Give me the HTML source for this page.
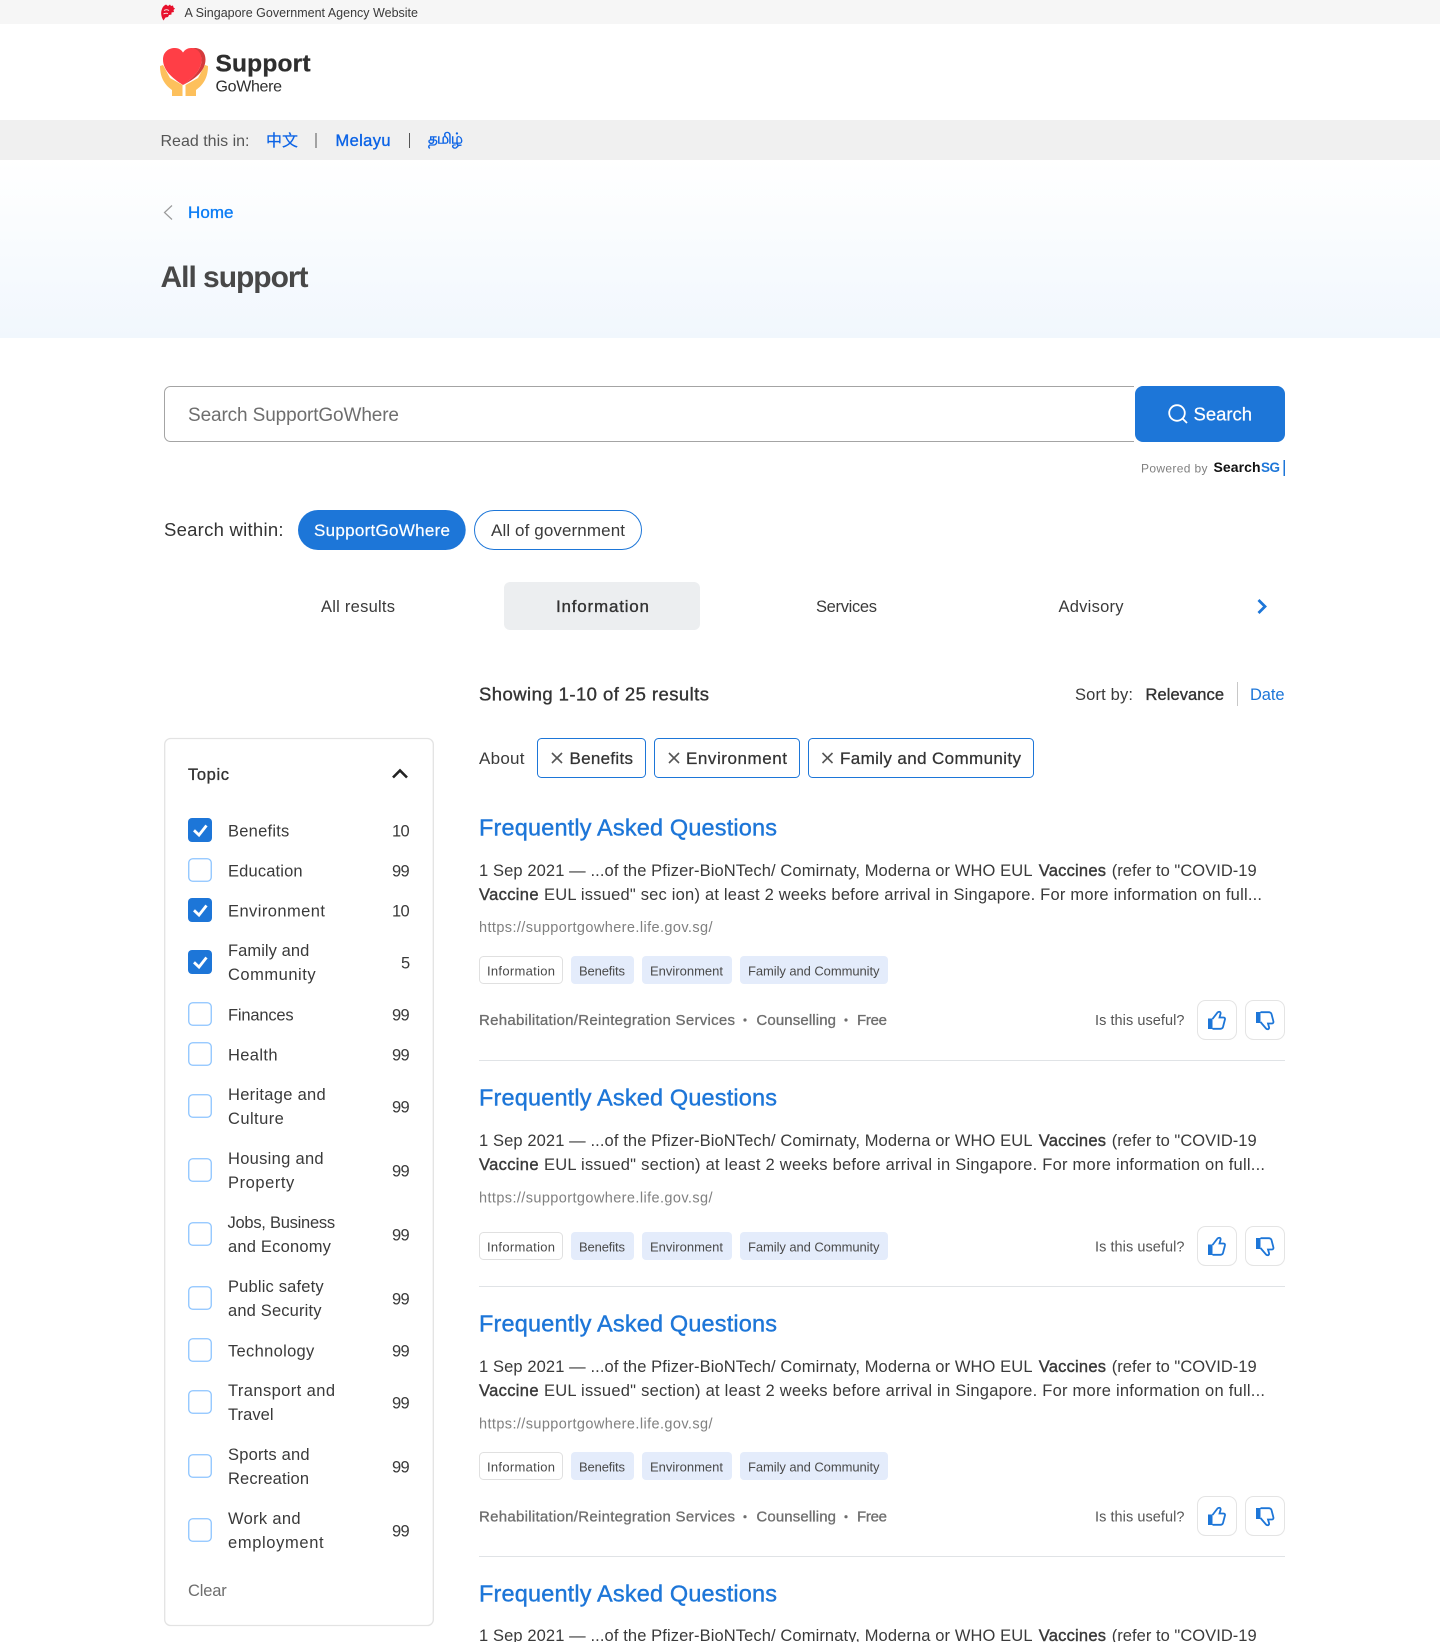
<!DOCTYPE html>
<html lang="en"><head><meta charset="utf-8"><title>All support - SupportGoWhere</title>
<style>
html,body{margin:0;padding:0;background:#fff}
svg{display:block}
text{font-family:"Liberation Sans","Noto Sans CJK SC",sans-serif;fill:#3a3a3a;font-size:16.5px}
.m{stroke:currentColor;stroke-width:.35px}
.b{color:#1d76d8;fill:#1d76d8}
.t{color:#1d76d8;fill:#1d76d8;font-size:23.5px;stroke:currentColor;stroke-width:.4px}
.url{fill:#808080;font-size:14.5px}
.tg{fill:#4a4a4a;font-size:13px}
.me{color:#6e6e6e;fill:#6e6e6e;font-size:15px;stroke:currentColor;stroke-width:.3px}
.u{fill:#555;font-size:14.5px}
.d{color:#3a3a3a;stroke:currentColor;stroke-width:.4px}
</style></head><body>
<svg xmlns="http://www.w3.org/2000/svg" width="1440" height="1642" viewBox="0 0 1440 1642">
<defs>
<linearGradient id="h" x1="0" y1="0" x2="0" y2="1"><stop offset="0" stop-color="#fff"/><stop offset="1" stop-color="#f1f7fd"/></linearGradient>
<g id="on"><rect width="24" height="24" rx="4" fill="#1d76d8"/><path d="M6 12.3l5 4.7 7.5-9.5" fill="none" stroke="#fff" stroke-width="2.8"/></g>
<g id="off"><rect x=".75" y=".75" width="22.5" height="22.5" rx="4" fill="#fff" stroke="#8cc4ff" stroke-width="1.3"/></g>
<g id="btns">
<rect x=".5" y=".5" width="39" height="39" rx="8" fill="#fff" stroke="#e4e4e4"/>
<rect x="48.5" y=".5" width="39" height="39" rx="8" fill="#fff" stroke="#e4e4e4"/>
<rect x="11" y="18.5" width="4.5" height="10.5" fill="#1d76d8"/>
<path d="M15.5 19L20.5 12.5C22.5 11 24 12 23.5 14L22.5 17.5L26.5 17.5C28 17.5 28.3 19 27.8 20L26 27C25.5 28.5 24.5 28.8 23.5 28.8L15.5 28.8" fill="none" stroke="#1d76d8" stroke-width="1.8"/>
<rect x="59" y="12" width="4.5" height="11" fill="#1d76d8"/>
<path d="M63.5 12.2L71.5 12.2C73 12.2 74 12.5 74.5 14L76.3 21C76.8 22.5 76 23.5 75 23.5L71 23.5L72 27C72.5 29 71 30 69 28.5L63.5 22" fill="none" stroke="#1d76d8" stroke-width="1.8"/>
</g>
<path id="x" d="M0 0l10 10M10 0l-10 10" fill="none" stroke="#555" stroke-width="1.6"/>
</defs>

<!-- masthead -->
<rect width="1440" height="24" fill="#f6f6f6"/>
<path d="M166 4.5L168 6L170 4.5L171 6L173 5.5L173.5 7.5L175 8.5L173.5 10L174 12L171.5 12.5L171.5 14.5L169 15L168 17L165.5 17.5L163.5 20.5C161 17 160.5 12 162 9C162.5 7 164 5.5 166 4.5Z" fill="#e8112d"/>
<path d="M164 10.5C165.5 9.5 167.5 9.5 169 10.5M163.5 14C165 13 166.5 13 168 13.5" fill="none" stroke="#f6f6f6" stroke-width=".8"/>
<text x="184.5" y="17" textLength="233.5" style="font-size:12.5px" fill="#484848">A Singapore Government Agency Website</text>

<!-- logo -->
<path d="M160 66L163 65L170 78L182.5 85L182.5 96L172 96L172 90C165 85 160 78 160 66Z" fill="#fdc05c"/>
<path d="M208 66L205 65L198 78L185.5 85L185.5 96L196 96L196 90C203 85 208 78 208 66Z" fill="#fdc05c"/>
<path d="M183 85C195 79 205.5 71 205.5 59.5C205.5 52.5 201 48 195 48C192.5 48 190 48.8 188 50L190 50C197 50 201.5 54 201.5 60C201.5 70 193 78 183 85Z" fill="#d43a3c"/>
<path d="M183 85C172 78 163 70 163 59.5C163 52 168.5 48 175 48C179 48 181.5 50 183 52.5C185 49.5 188 48 191 48C197.5 48 201.5 53 201.5 60C201.5 70 193 78 183 85Z" fill="#ff3e46"/>
<text x="215.5" y="71.5" textLength="95" font-weight="700" style="font-size:24.5px;fill:#2e2e2e;color:#2e2e2e;stroke:currentColor;stroke-width:.3px">Support</text>
<text x="215.5" y="91.5" textLength="66.5" style="font-size:16px;fill:#2e2e2e">GoWhere</text>

<!-- language bar -->
<rect y="120" width="1440" height="40" fill="#f0f0f0"/>
<text x="160.5" y="146" textLength="89" style="font-size:16px;fill:#555">Read this in:</text>
<text x="266" y="146" textLength="32" class="m" style="font-size:16px;fill:#0b63e6;color:#0b63e6;stroke-width:.2px">中文</text>
<rect x="315.5" y="133" width="1" height="15" fill="#555"/>
<text x="335.5" y="146" textLength="55" class="m" style="font-size:16.5px;fill:#0b63e6;color:#0b63e6">Melayu</text>
<rect x="409" y="133" width="1" height="15" fill="#555"/>
<text x="428" y="143.5" textLength="35" class="m" style="font-size:15px;fill:#0b63e6;color:#0b63e6;stroke-width:.5px">தமிழ்</text>

<!-- hero -->
<rect y="160" width="1440" height="178" fill="url(#h)"/>
<path d="M172 205.5L164.5 212.5L172 219.5" fill="none" stroke="#9a9a9a" stroke-width="1.2"/>
<text x="188" y="218" textLength="45.5" class="m" style="font-size:17px;fill:#0a7cf5;color:#0a7cf5">Home</text>
<text x="160.5" y="287" textLength="148" font-weight="700" style="font-size:30px;fill:#484848">All support</text>

<!-- search -->
<path d="M1134 386.5H170.5a6 6 0 0 0-6 6V435.5a6 6 0 0 0 6 6H1134" fill="#fff" stroke="#a4a4a4"/>
<text x="188" y="421" textLength="211" style="font-size:19px;fill:#6e6e6e">Search SupportGoWhere</text>
<rect x="1135" y="386" width="150" height="56" rx="8" fill="#1d76d8"/>
<circle cx="1177" cy="413" r="7.8" fill="none" stroke="#fff" stroke-width="1.8"/>
<path d="M1182.5 418.5L1187 423" stroke="#fff" stroke-width="1.8"/>
<text x="1193.5" y="420.5" textLength="58.5" class="m" style="font-size:18.5px;fill:#fff;color:#fff;stroke-width:.2px">Search</text>
<text x="1141" y="472.5" textLength="66.5" style="font-size:12px;fill:#808080">Powered by</text>
<text x="1213.5" y="472" textLength="47" font-weight="700" style="font-size:14px;fill:#111">Search</text>
<text x="1261" y="472" textLength="19" font-weight="700" style="font-size:13.5px;fill:#1d76d8">SG</text>
<rect x="1283.5" y="460" width="1.5" height="16" fill="#1d76d8"/>

<!-- search within -->
<text x="164" y="536" textLength="119.5" style="font-size:18.5px;fill:#333">Search within:</text>
<rect x="298" y="510" width="167.7" height="40" rx="20" fill="#1d76d8"/>
<text x="314" y="536" textLength="136" class="m" style="font-size:17px;fill:#fff;color:#fff;stroke-width:.2px">SupportGoWhere</text>
<rect x="474.5" y="510.5" width="167" height="39" rx="19.5" fill="#fff" stroke="#1d76d8"/>
<text x="491" y="536" textLength="134" style="font-size:17px">All of government</text>

<!-- tabs -->
<text x="321" y="612" textLength="74" style="font-size:16.5px">All results</text>
<rect x="504" y="582" width="196" height="48" rx="6" fill="#eceef0"/>
<text x="556" y="612" textLength="93" class="m" style="font-size:17px;color:#333;fill:#333">Information</text>
<text x="816" y="612" textLength="61" style="font-size:16.5px">Services</text>
<text x="1058.5" y="612" textLength="65" style="font-size:16.5px">Advisory</text>
<path d="M1258.5 600L1265 606.5L1258.5 613" fill="none" stroke="#1d76d8" stroke-width="2.8"/>

<!-- results bar -->
<text x="479" y="700.5" textLength="230" class="m" style="font-size:18.5px;color:#333;fill:#333">Showing 1-10 of 25 results</text>
<text x="1075" y="700" textLength="58" style="font-size:16.5px">Sort by:</text>
<text x="1145.5" y="700" textLength="78.5" class="m" style="font-size:16.5px;color:#333;fill:#333">Relevance</text>
<rect x="1237" y="682" width="1" height="24" fill="#c8c8c8"/>
<text x="1250" y="700" textLength="34.5" class="b">Date</text>

<!-- sidebar -->
<rect x="164.7" y="738.5" width="268.6" height="887" rx="6" fill="#fff" stroke="#e3e3e3" stroke-width="1.3"/>
<text x="188" y="780" textLength="41" class="m" style="font-size:16.5px;color:#333;fill:#333">Topic</text>
<path d="M393 777.5L400 770.5L407 777.5" fill="none" stroke="#222" stroke-width="2.6"/>

<use href="#on" x="188" y="818"/><text x="228" y="836.4" textLength="61.3">Benefits</text><text x="392" y="836.4" textLength="17.7">10</text>
<use href="#off" x="188" y="858"/><text x="228" y="876.4" textLength="74.6">Education</text><text x="392" y="876.4" textLength="17.7">99</text>
<use href="#on" x="188" y="898"/><text x="228" y="916.4" textLength="97">Environment</text><text x="392" y="916.4" textLength="17.7">10</text>
<use href="#on" x="188" y="950"/><text x="228" y="956" textLength="81.3">Family and</text><text x="228" y="980" textLength="87.6">Community</text><text x="401" y="968.4" textLength="8.7">5</text>
<use href="#off" x="188" y="1002"/><text x="228" y="1020.4" textLength="65.6">Finances</text><text x="392" y="1020.4" textLength="17.7">99</text>
<use href="#off" x="188" y="1042"/><text x="228" y="1060.4" textLength="49.5">Health</text><text x="392" y="1060.4" textLength="17.7">99</text>
<use href="#off" x="188" y="1094"/><text x="228" y="1100" textLength="97.7">Heritage and</text><text x="228" y="1124" textLength="55.8">Culture</text><text x="392" y="1112.4" textLength="17.7">99</text>
<use href="#off" x="188" y="1158"/><text x="228" y="1164" textLength="95.6">Housing and</text><text x="228" y="1188" textLength="66.3">Property</text><text x="392" y="1176.4" textLength="17.7">99</text>
<use href="#off" x="188" y="1222"/><text x="227.5" y="1228" textLength="107.6">Jobs, Business</text><text x="228" y="1252" textLength="102.9">and Economy</text><text x="392" y="1240.4" textLength="17.7">99</text>
<use href="#off" x="188" y="1286"/><text x="228" y="1292" textLength="95.6">Public safety</text><text x="228" y="1316" textLength="93.5">and Security</text><text x="392" y="1304.4" textLength="17.7">99</text>
<use href="#off" x="188" y="1338"/><text x="228" y="1356.4" textLength="86.3">Technology</text><text x="392" y="1356.4" textLength="17.7">99</text>
<use href="#off" x="188" y="1390"/><text x="228" y="1396" textLength="107">Transport and</text><text x="228" y="1420" textLength="45.6">Travel</text><text x="392" y="1408.4" textLength="17.7">99</text>
<use href="#off" x="188" y="1454"/><text x="228" y="1460" textLength="81.6">Sports and</text><text x="228" y="1484" textLength="81">Recreation</text><text x="392" y="1472.4" textLength="17.7">99</text>
<use href="#off" x="188" y="1518"/><text x="228" y="1524" textLength="72.6">Work and</text><text x="228" y="1548" textLength="95.6">employment</text><text x="392" y="1536.4" textLength="17.7">99</text>
<text x="188" y="1596" textLength="38.7" style="fill:#6e6e6e">Clear</text>

<!-- filter chips -->
<text x="479" y="764" textLength="45.5" style="font-size:17px">About</text>
<rect x="537.5" y="738.5" width="108" height="39" rx="4" fill="#fff" stroke="#1d76d8"/>
<use href="#x" x="552" y="753"/>
<text x="569.5" y="764" textLength="63.5" class="m" style="font-size:17px;color:#333;fill:#333;stroke-width:.25px">Benefits</text>
<rect x="654.5" y="738.5" width="145" height="39" rx="4" fill="#fff" stroke="#1d76d8"/>
<use href="#x" x="669" y="753"/>
<text x="686" y="764" textLength="101" class="m" style="font-size:17px;color:#333;fill:#333;stroke-width:.25px">Environment</text>
<rect x="808.5" y="738.5" width="225" height="39" rx="4" fill="#fff" stroke="#1d76d8"/>
<use href="#x" x="822.5" y="753"/>
<text x="840" y="764" textLength="181" class="m" style="font-size:17px;color:#333;fill:#333;stroke-width:.25px">Family and Community</text>

<!-- result 1 -->
<text x="479" y="835.5" textLength="298" class="t">Frequently Asked Questions</text>
<text x="479" y="876.2" textLength="553.5">1 Sep 2021 — ...of the Pfizer-BioNTech/ Comirnaty, Moderna or WHO EUL</text>
<text x="1038.7" y="876.2" textLength="67.3" class="d">Vaccines</text>
<text x="1111.7" y="876.2" textLength="145">(refer to "COVID-19</text>
<text x="479" y="900.2" textLength="59.5" class="d">Vaccine</text>
<text x="544" y="900.2" textLength="718">EUL issued" sec ion) at least 2 weeks before arrival in Singapore. For more information on full...</text>
<text x="479" y="932" textLength="233.5" class="url">https://supportgowhere.life.gov.sg/</text>
<rect x="479.5" y="956.5" width="83" height="27" rx="4" fill="#fff" stroke="#e0e0e0"/>
<text x="487" y="975.3" textLength="68" class="tg">Information</text>
<rect x="571" y="956" width="63" height="28" rx="4" fill="#e4ecfb"/>
<text x="579" y="975.3" textLength="46" class="tg">Benefits</text>
<rect x="642" y="956" width="90" height="28" rx="4" fill="#e4ecfb"/>
<text x="650" y="975.3" textLength="73" class="tg">Environment</text>
<rect x="740" y="956" width="148" height="28" rx="4" fill="#e4ecfb"/>
<text x="748" y="975.3" textLength="131.5" class="tg">Family and Community</text>
<text x="479" y="1025" textLength="256" class="me">Rehabilitation/Reintegration Services</text>
<circle cx="745" cy="1020" r="1.6" fill="#6e6e6e"/>
<text x="756.4" y="1025" textLength="79.6" class="me">Counselling</text>
<circle cx="846" cy="1020" r="1.6" fill="#6e6e6e"/>
<text x="857" y="1025" textLength="30" class="me">Free</text>
<text x="1095" y="1025" textLength="89.5" class="u">Is this useful?</text>
<use href="#btns" x="1197" y="1000"/>
<rect x="479" y="1060" width="806" height="1" fill="#e0e3e6"/>

<!-- result 2 -->
<text x="479" y="1105.5" textLength="298" class="t">Frequently Asked Questions</text>
<text x="479" y="1146.2" textLength="553.5">1 Sep 2021 — ...of the Pfizer-BioNTech/ Comirnaty, Moderna or WHO EUL</text>
<text x="1038.7" y="1146.2" textLength="67.3" class="d">Vaccines</text>
<text x="1111.7" y="1146.2" textLength="145">(refer to "COVID-19</text>
<text x="479" y="1170.2" textLength="59.5" class="d">Vaccine</text>
<text x="544" y="1170.2" textLength="721">EUL issued" section) at least 2 weeks before arrival in Singapore. For more information on full...</text>
<text x="479" y="1202.3" textLength="233.5" class="url">https://supportgowhere.life.gov.sg/</text>
<rect x="479.5" y="1232.5" width="83" height="27" rx="4" fill="#fff" stroke="#e0e0e0"/>
<text x="487" y="1251.5" textLength="68" class="tg">Information</text>
<rect x="571" y="1232" width="63" height="28" rx="4" fill="#e4ecfb"/>
<text x="579" y="1251.5" textLength="46" class="tg">Benefits</text>
<rect x="642" y="1232" width="90" height="28" rx="4" fill="#e4ecfb"/>
<text x="650" y="1251.5" textLength="73" class="tg">Environment</text>
<rect x="740" y="1232" width="148" height="28" rx="4" fill="#e4ecfb"/>
<text x="748" y="1251.5" textLength="131.5" class="tg">Family and Community</text>
<text x="1095" y="1251.5" textLength="89.5" class="u">Is this useful?</text>
<use href="#btns" x="1197" y="1226"/>
<rect x="479" y="1286" width="806" height="1" fill="#e0e3e6"/>

<!-- result 3 -->
<text x="479" y="1331.5" textLength="298" class="t">Frequently Asked Questions</text>
<text x="479" y="1372.2" textLength="553.5">1 Sep 2021 — ...of the Pfizer-BioNTech/ Comirnaty, Moderna or WHO EUL</text>
<text x="1038.7" y="1372.2" textLength="67.3" class="d">Vaccines</text>
<text x="1111.7" y="1372.2" textLength="145">(refer to "COVID-19</text>
<text x="479" y="1396.2" textLength="59.5" class="d">Vaccine</text>
<text x="544" y="1396.2" textLength="721">EUL issued" section) at least 2 weeks before arrival in Singapore. For more information on full...</text>
<text x="479" y="1428.3" textLength="233.5" class="url">https://supportgowhere.life.gov.sg/</text>
<rect x="479.5" y="1452.5" width="83" height="27" rx="4" fill="#fff" stroke="#e0e0e0"/>
<text x="487" y="1471.5" textLength="68" class="tg">Information</text>
<rect x="571" y="1452" width="63" height="28" rx="4" fill="#e4ecfb"/>
<text x="579" y="1471.5" textLength="46" class="tg">Benefits</text>
<rect x="642" y="1452" width="90" height="28" rx="4" fill="#e4ecfb"/>
<text x="650" y="1471.5" textLength="73" class="tg">Environment</text>
<rect x="740" y="1452" width="148" height="28" rx="4" fill="#e4ecfb"/>
<text x="748" y="1471.5" textLength="131.5" class="tg">Family and Community</text>
<text x="479" y="1521.7" textLength="256" class="me">Rehabilitation/Reintegration Services</text>
<circle cx="745" cy="1516.7" r="1.6" fill="#6e6e6e"/>
<text x="756.4" y="1521.7" textLength="79.6" class="me">Counselling</text>
<circle cx="846" cy="1516.7" r="1.6" fill="#6e6e6e"/>
<text x="857" y="1521.7" textLength="30" class="me">Free</text>
<text x="1095" y="1521.7" textLength="89.5" class="u">Is this useful?</text>
<use href="#btns" x="1197" y="1496"/>
<rect x="479" y="1556" width="806" height="1" fill="#e0e3e6"/>

<!-- result 4 -->
<text x="479" y="1601.5" textLength="298" class="t">Frequently Asked Questions</text>
<text x="479" y="1641.2" textLength="553.5">1 Sep 2021 — ...of the Pfizer-BioNTech/ Comirnaty, Moderna or WHO EUL</text>
<text x="1038.7" y="1641.2" textLength="67.3" class="d">Vaccines</text>
<text x="1111.7" y="1641.2" textLength="145">(refer to "COVID-19</text>
</svg>
</body></html>
